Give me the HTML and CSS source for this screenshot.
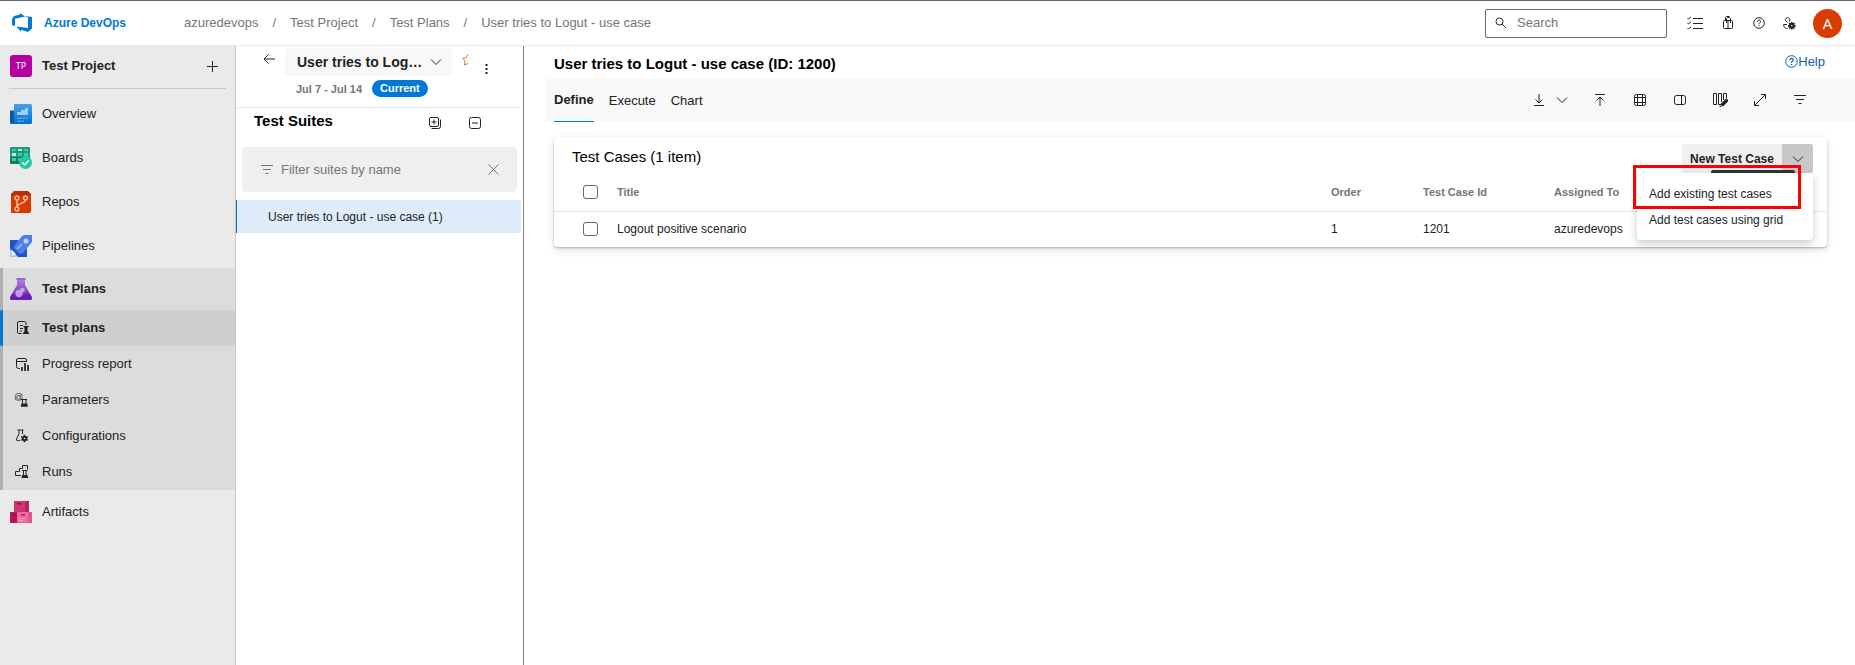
FILE: index.html
```html
<!DOCTYPE html>
<html lang="en">
<head>
<meta charset="utf-8">
<title>User tries to Logut - use case - Test Plans</title>
<link rel="stylesheet" href="styles.css">
</head>
<body>
<header class="topbar">
  <a class="brand" href="#">
    <svg class="brand-logo" width="20" height="20" viewBox="0 0 20 20"><path fill="#0078d7" d="M0 6 2 3 8 1.500V0l5 3.500L3 5.700v7.300L0 12zM20 4v11.300L16 19l-7-2.300V19L4.500 13.600 16 15V4.400L13 3z"/></svg>
    <span>Azure DevOps</span>
  </a>
  <nav class="crumbs" aria-label="Breadcrumb">
    <a href="#">azuredevops</a><span>/</span><a href="#">Test Project</a><span>/</span><a href="#">Test Plans</a><span>/</span><a href="#">User tries to Logut - use case</a>
  </nav>
  <label class="search">
    <svg class="ico" width="12" height="12" viewBox="0 0 12 12"><circle cx="4.500" cy="4.500" r="3.500"/><path d="M7 7l4 4"/></svg>
    <input type="search" placeholder="Search" aria-label="Search">
  </label>
  <div class="top-actions">
    <button type="button" aria-label="Work items"><svg class="ico" width="16" height="14" viewBox="0 0 16 14"><path d="M6 2.500h10M6 7.500h10M6 12.500h10M0.500 2l1 1L4 0.800M0.500 7l1 1L4 5.800M0.500 12l1 1L4 10.800"/></svg></button>
    <button type="button" aria-label="Marketplace"><svg class="ico" width="12" height="14" viewBox="0 0 12 14"><path d="M2.500 4.500h7q1 0 1 1v6q0 1-1 1h-7q-1 0-1-1v-6q0-1 1-1zM4.500 7V2.500l1-1h2l1 1V7M3.500 4V1.500l1-1h3M6 4.500v8"/></svg></button>
    <button type="button" aria-label="Help"><svg class="ico" width="12" height="12" viewBox="0 0 12 12"><circle cx="6" cy="6" r="5.300"/><path d="M4.300 4.800C4.300 2.500 7.700 2.600 7.700 4.700 7.700 5.800 6 5.800 6 7.300M6 8.300v1"/></svg></button>
    <button type="button" aria-label="User settings"><svg class="ico" width="13" height="13" viewBox="0 0 13 13"><path d="M6.500 4.500C7.500 2 6 .8 4.500.8S2 2 2.500 3.500L4.500 5.500M1 7.500h3M1 7c-1 3 1 4.500 3.500 4.500"/><circle class="solid" cx="8.800" cy="8.800" r="2.700"/><path stroke-width="1.700" d="M8.800 5v7.600M5 8.800h7.600M6.100 6.100l5.400 5.400M11.500 6.100l-5.400 5.400"/><circle cx="8.800" cy="8.800" r="0.800" class="hole"/></svg></button>
  </div>
  <button class="avatar" type="button" aria-label="Account">A</button>
</header>

<div class="shell">
  <nav class="sidebar" aria-label="Project">
    <div class="project">
      <span class="project-badge">TP</span>
      <a href="#">Test Project</a>
      <button type="button" aria-label="New"><svg class="ico" width="11" height="11" viewBox="0 0 11 11"><path d="M5.500 0v11M0 5.500h11"/></svg></button>
    </div>
    <a class="hub" href="#"><svg width="22" height="22" viewBox="0 0 22 22"><defs><linearGradient id="ov" x2="0" y2="1"><stop stop-color="#4aa0e8"/><stop offset="1" stop-color="#0070d0"/></linearGradient></defs><path fill="#0b5aa6" d="M0 7.500h5V21H1.500Q0 21 0 19.500z"/><path fill="url(#ov)" d="M4 1h16.500Q22 1 22 2.500v17q0 1.500-1.500 1.500H2.500Q4 21 4 19z"/><path fill="#9cd0fa" d="M7 12V9h4V7h4V5h3v7z"/><path fill="#4b9fe5" d="M7 14.500h11V16H7zM7 17.500h7V19H7z"/></svg><span>Overview</span></a>
    <a class="hub" href="#"><svg width="22" height="22" viewBox="0 0 22 22"><path fill="#219a7c" d="M1 0h18q1 0 1 1v16H1q-1 0-1-1V1q0-1 1-1z"/><path fill="#137c61" d="M0 10h12v7H1q-1 0-1-1z"/><path fill="#45c9a5" d="M2 2h4v2H2zM14 2h4v2h-4zM8 6h4v3H8zM14 6h4v3h-4zM2 11h4v3H2zM8 11h3v3H8z"/><path fill="#a5f2dc" d="M8 2h4v2H8zM2 6h4v3H2z"/><circle cx="15.500" cy="15.500" r="6.500" fill="#1fc9a4"/><path d="M12.300 15.500l2.400 2.300 4.100-4.300" fill="none" stroke="#fff" stroke-width="1.700"/></svg><span>Boards</span></a>
    <a class="hub" href="#"><svg width="22" height="22" viewBox="0 0 22 22"><path fill="#d83b01" d="M1 3h20v17q0 2-2 2H1z"/><path fill="#ba2f00" d="M1 4.500V3l3-3h14l3 3v1.500z"/><g fill="none" stroke="#f9b596" stroke-width="1.500"><circle cx="7" cy="7" r="1.900"/><circle cx="15.500" cy="7" r="1.900"/><circle cx="7" cy="18" r="1.900"/><path d="M7 9v7M15.500 9c0 4-8.500 2.500-8.500 7"/></g></svg><span>Repos</span></a>
    <a class="hub" href="#"><svg width="22" height="22" viewBox="0 0 22 22"><path fill="#1f57c3" d="M0 5h8l9 9v8H8L0 14z"/><path fill="#4a80e8" d="M12 1l2-1h8v7l-9 11-3 1-6-6 1-3z"/><circle cx="16" cy="6" r="2.500" fill="#bcd2ff"/><path d="M7 14l5-5" stroke="#9dbcf8" stroke-width="1.500"/><path fill="#a5c2fa" d="M0 14l3 3H1.500v3.500H5L4.500 18l3 4H0z"/><path fill="#e8f0ff" d="M2 15l4 4-2 1-3-3z"/></svg><span>Pipelines</span></a>
    <div class="hub-group">
      <a class="hub hub-open" href="#"><svg width="22" height="22" viewBox="0 0 22 22"><defs><linearGradient id="fl" x2="0" y2="1"><stop stop-color="#b88ae0"/><stop offset="1" stop-color="#5b1ba8"/></linearGradient></defs><path fill="url(#fl)" d="M7 0h8v7l6.500 11.500Q23 22 20 22H2q-3 0-1.500-3.500L7 7z"/><path fill="#9b60d4" d="M6.500 0h9v2h-9z"/><path fill="#651fb3" d="M2 16h18l1.500 3q.5 3-1.500 3H2q-2 0-1.500-3z"/><circle cx="9" cy="15.500" r="3.700" fill="#d5b3f5" opacity=".8"/><circle cx="12.500" cy="12" r="2.300" fill="#d5b3f5" opacity=".8"/></svg><span>Test Plans</span></a>
      <a class="sub sub-current" href="#"><svg class="ico" width="16" height="16" viewBox="0 0 16 16"><path d="M7.500 13.500H5Q3.500 13.500 3.500 12V3Q3.500 1.500 5 1.500h5.500Q12 1.500 12 3v2M6 5.500h3M6 8.500h3M6 11h2"/><path class="solid" d="M9.500 6h5v1l-1 .5v3.500l2 3H8.500l2-3V7.500l-1-.5z"/></svg><span>Test plans</span></a>
      <a class="sub" href="#"><svg class="ico" width="16" height="16" viewBox="0 0 16 16"><path d="M6 12.500H4.500Q2.500 12.500 2.500 10.500V4Q2.500 2.500 4 2.500h7Q12.500 2.500 12.500 4v2M2.500 5.500h10"/><path stroke-width="1.700" d="M8 11v4M11 7v8M14 9v6"/></svg><span>Progress report</span></a>
      <a class="sub" href="#"><svg class="ico" width="16" height="16" viewBox="0 0 16 16"><text class="glyph" x="0" y="8">@</text><path d="M7 7.500h6M8.500 8v3L7 14h6.500L12 11V8"/><path class="solid" d="M8 11.500h5l.5 3H7z"/></svg><span>Parameters</span></a>
      <a class="sub" href="#"><svg class="ico" width="16" height="16" viewBox="0 0 16 16"><path d="M3.500 2h6M5 2v4L2.500 11Q2 12.500 3.500 12.500h2.500M8.500 2v4"/><circle class="solid" cx="10.500" cy="10.500" r="2.500"/><path stroke-width="1.800" d="M10.500 6.800v7.400M7.300 8.700l6.400 3.600M13.700 8.700l-6.400 3.600"/><circle cx="10.500" cy="10.500" r=".8" class="hole"/></svg><span>Configurations</span></a>
      <a class="sub" href="#"><svg class="ico" width="16" height="16" viewBox="0 0 16 16"><path d="M7 11.500H1.500v-4h4v-3h3v-3h5v4M8 6.500h5.500M9.500 7v3L8 13.500h6L12 10V7"/><path class="solid" d="M8.500 11h4.500l1 3H7.500z"/></svg><span>Runs</span></a>
    </div>
    <a class="hub" href="#"><svg width="22" height="22" viewBox="0 0 22 22"><path fill="#cc3472" d="M4 0h15v11H4z"/><path fill="#b62462" d="M15 0h4v11h-4z"/><path fill="#b41858" d="M0 11h8v11H1q-1 0-1-1z"/><path fill="#ef6a9f" d="M7 11h15v10q0 1-1 1H7z"/><path fill="#e2568f" d="M18 11h4v11h-4z"/><path fill="#8e104a" d="M7 2h4v1.500H7zM3.500 13h3v1.500h-3z"/><path fill="#b41858" d="M11 13h4v1.500h-4z"/><path fill="#f9a4c6" d="M9 17h6v1H9zM9 19h4v1H9z"/></svg><span>Artifacts</span></a>
  </nav>

  <aside class="suites">
    <div class="plan">
      <div class="plan-row">
        <button class="back" type="button" aria-label="Back"><svg class="ico" width="12" height="10" viewBox="0 0 12 10"><path d="M12 5H1M5.500.5L1 5l4.500 4.500"/></svg></button>
        <button class="plan-picker" type="button"><span>User tries to Log…</span><svg class="ico" width="12" height="8" viewBox="0 0 12 8"><path d="M1 1.500l5 5 5-5"/></svg></button>
        <button class="star" type="button" aria-label="Favorite"><svg width="7" height="12" viewBox="0 0 7 12"><path d="M6.500.5Q4.500 1 4.300 3.700L.7 4.300 3 7l-.5 4 3.500-1.500" fill="none" stroke="#dd7a35"/></svg></button>
        <button class="more" type="button" aria-label="More"><svg width="3" height="10" viewBox="0 0 3 10"><path fill="#222" d="M.5 0h2v2h-2zM.5 4h2v2h-2zM.5 8h2v2h-2z"/></svg></button>
      </div>
      <div class="plan-dates"><span>Jul 7 - Jul 14</span><span class="pill">Current</span></div>
    </div>
    <div class="suites-head">
      <h2>Test Suites</h2>
      <button type="button" aria-label="Expand all"><svg class="ico" width="12" height="12" viewBox="0 0 12 12"><rect x=".5" y=".5" width="9" height="9" rx="1.500"/><path d="M5 2.500v5M2.500 5h5M11.500 2.500v7q0 2-2 2h-7"/></svg></button>
      <button type="button" aria-label="Collapse all"><svg class="ico" width="12" height="12" viewBox="0 0 12 12"><rect x=".5" y=".5" width="11" height="11" rx="2"/><path d="M3 6h6"/></svg></button>
    </div>
    <div class="filter">
      <svg class="ico" width="12" height="9" viewBox="0 0 12 9"><path d="M0 .5h12M2 4.500h8M4.500 8.500h3"/></svg>
      <input type="text" placeholder="Filter suites by name" aria-label="Filter suites by name">
      <button type="button" aria-label="Clear"><svg class="ico" width="11" height="11" viewBox="0 0 11 11"><path d="M.5.5l10 10M10.500.5l-10 10"/></svg></button>
    </div>
    <a class="suite" href="#">User tries to Logut - use case (1)</a>
  </aside>

  <main class="main">
    <div class="title-row">
      <h1>User tries to Logut - use case (ID: 1200)</h1>
      <a class="help" href="#"><svg width="13" height="13" viewBox="0 0 13 13" fill="none" stroke="currentColor"><circle cx="6.500" cy="6.500" r="5.800"/><path stroke-width="1.200" d="M4.700 5.200C4.700 2.800 8.300 2.900 8.300 5.100 8.300 6.300 6.500 6.300 6.500 7.900M6.500 9v1.200"/></svg>Help</a>
    </div>
    <div class="toolbar">
      <nav class="tabs" aria-label="Views">
        <a class="tab tab-on" href="#">Define</a><a class="tab" href="#">Execute</a><a class="tab" href="#">Chart</a>
      </nav>
      <div class="tools">
        <button class="tool-import" type="button" aria-label="Import"><svg class="ico" width="10" height="12" viewBox="0 0 10 12"><path d="M5 0v9M1.500 5.500L5 9l3.500-3.500M0 11.500h10"/></svg></button>
        <button class="tool-menu" type="button" aria-label="Import options"><svg class="ico" width="12" height="8" viewBox="0 0 12 8"><path d="M1 1.500l5 5 5-5"/></svg></button>
        <button type="button" aria-label="Export"><svg class="ico" width="10" height="12" viewBox="0 0 10 12"><path d="M5 12V3M1.500 6.500L5 3l3.500 3.500M0 .5h10"/></svg></button>
        <button type="button" aria-label="Grid view"><svg class="ico" width="12" height="12" viewBox="0 0 12 12"><rect x=".5" y=".5" width="11" height="11" rx="2"/><path d="M3.500.5v11M8.500.5v11M.5 3.500h11M.5 8.500h11"/></svg></button>
        <button type="button" aria-label="Details pane"><svg class="ico" width="12" height="10" viewBox="0 0 12 10"><rect x=".5" y=".5" width="11" height="9" rx="2"/><path d="M7.500.5v9"/></svg></button>
        <button type="button" aria-label="Column options"><svg class="ico" width="15" height="14" viewBox="0 0 15 14"><path d="M.5.500h3v11h-3zM8 11.500H5.500V.5h3V9M10.500 7V.5h3V5"/><path stroke-width="3.500" d="M14.500 6.500L8.500 12.500"/><path class="solid" d="M7 12l-.5 2h2z"/></svg></button>
        <button type="button" aria-label="Full screen"><svg class="ico" width="12" height="12" viewBox="0 0 12 12"><path d="M.8 11.200L11.200.8M7 .5h4.500V5M5 11.500H.5V7"/></svg></button>
        <button type="button" aria-label="Filter"><svg class="ico" width="12" height="9" viewBox="0 0 12 9"><path d="M0 .5h12M2 4.500h8M4.500 8.500h3"/></svg></button>
      </div>
    </div>

    <section class="card">
      <div class="card-head">
        <h2>Test Cases (1 item)</h2>
        <div class="split">
          <button class="split-main" type="button">New Test Case</button>
          <button class="split-more" type="button" aria-label="More options" aria-expanded="true"><svg class="ico" width="12" height="8" viewBox="0 0 12 8"><path d="M1 1.500l5 5 5-5"/></svg></button>
          <span class="tip-edge"></span>
          <div class="menu" role="menu">
            <button type="button" role="menuitem">Add existing test cases</button>
            <button type="button" role="menuitem">Add test cases using grid</button>
          </div>
          <span class="marker"></span>
        </div>
      </div>
      <table class="cases">
        <thead>
          <tr><th class="c-check"><input type="checkbox" aria-label="Select all"></th><th>Title</th><th class="c-order">Order</th><th class="c-id">Test Case Id</th><th class="c-who">Assigned To</th></tr>
        </thead>
        <tbody>
          <tr><td class="c-check"><input type="checkbox" aria-label="Select Logout positive scenario"></td><td>Logout positive scenario</td><td>1</td><td>1201</td><td>azuredevops</td></tr>
        </tbody>
      </table>
    </section>
  </main>
</div>
</body>
</html>
```
FILE: styles.css
```css
* { box-sizing: border-box; }

body {
  margin: 0;
  min-height: 100vh;
  display: flex;
  flex-direction: column;
  font: 13px/16px "Liberation Sans", Arial, sans-serif;
  color: #222;
  background: #fff;
}

a { color: inherit; text-decoration: none; }
h1, h2 { margin: 0; color: #000; }
button {
  display: flex;
  align-items: center;
  justify-content: center;
  margin: 0;
  padding: 0;
  border: 0;
  background: none;
  font: inherit;
  color: inherit;
}
input { font: inherit; color: #222; }
input::placeholder { color: #757575; opacity: 1; }
svg { display: block; flex: none; }

.ico { fill: none; stroke: #222; stroke-width: 1; }
.ico .solid { fill: #222; stroke: none; }
.ico .hole { fill: #fff; stroke: none; }
.ico .glyph { fill: #222; stroke: none; font-size: 9px; }

/* Top bar */
.topbar {
  display: flex;
  align-items: center;
  height: 46px;
  padding: 0 13px 0 12px;
  border-top: 1px solid #666;
  border-bottom: 1px solid #eaeaea;
}
.brand {
  display: flex;
  align-items: center;
  gap: 12px;
  width: 172px;
  font-size: 12px;
  font-weight: bold;
  color: #0078d7;
}
.crumbs { display: flex; gap: 14px; flex: 1; color: #757575; }
.search {
  display: flex;
  align-items: center;
  gap: 10px;
  width: 182px;
  height: 29px;
  padding: 0 9px;
  border: 1px solid #666;
  border-radius: 2px;
}
.search input { flex: 1; min-width: 0; padding: 0; border: 0; outline: 0; background: none; }
.top-actions { display: flex; align-items: center; margin: 0 8px 0 11px; }
.top-actions button { width: 31px; height: 28px; }
.top-actions button:first-child { width: 34px; }
.avatar {
  width: 29px;
  height: 29px;
  border-radius: 50%;
  background: #da3b01;
  color: #fff;
  font: 15px/29px "Noto Sans", sans-serif;
}

.shell { display: flex; flex: 1; }

/* Project navigation */
.sidebar {
  width: 236px;
  background: #eaeaea;
  border-right: 1px solid #c8c8c8;
}
.project {
  display: flex;
  align-items: center;
  gap: 10px;
  height: 43px;
  margin: 0 9px 3px;
  padding: 0 8px 2px 1px;
  border-bottom: 1px solid #c8c8c8;
  font-weight: bold;
}
.project a { flex: 1; }
.project-badge {
  width: 22px;
  height: 22px;
  border-radius: 3px;
  background: #b4009e;
  color: #fff;
  font: 9px/22px "Noto Sans", sans-serif;
  text-align: center;
}
.hub { display: flex; align-items: center; gap: 10px; height: 44px; padding-left: 10px; }
.hub-group { border-left: 3px solid #b0b0b0; background: #dcdcdc; }
.hub-open { height: 42px; padding-left: 7px; font-weight: bold; }
.sub { display: flex; align-items: center; gap: 12px; height: 36px; padding-left: 11px; }
.sub-current {
  margin-left: -3px;
  border-left: 3px solid #0078d7;
  border-radius: 2px;
  background: #cfcfcf;
  font-weight: bold;
}

/* Suites panel */
.suites { width: 288px; padding-right: 2px; border-right: 1px solid #808080; }
.plan { height: 62px; padding-top: 2px; border-bottom: 1px solid #eaeaea; }
.plan-row { display: flex; align-items: flex-start; height: 28px; }
.back { width: 49px; height: 22px; padding-left: 17px; }
.plan-picker {
  justify-content: space-between;
  width: 167px;
  height: 28px;
  padding: 0 10px 0 12px;
  border-radius: 2px;
  background: #f8f8f8;
  font-size: 14px;
  font-weight: bold;
  white-space: nowrap;
}
.star { width: 26px; height: 24px; }
.more { width: 16px; height: 42px; }
.plan-dates {
  display: flex;
  align-items: center;
  gap: 10px;
  padding: 4px 0 0 60px;
  color: #757575;
  font-size: 11px;
  font-weight: bold;
}
.pill { padding: 0 8px; border-radius: 9px; background: #0078d7; color: #fff; line-height: 17px; }
.suites-head {
  display: flex;
  align-items: center;
  gap: 28px;
  height: 29px;
  padding: 0 40px 0 18px;
}
.suites-head h2 { flex: 1; padding-bottom: 4px; font-size: 15px; }
.filter {
  display: flex;
  align-items: center;
  height: 45px;
  margin: 10px 4px 8px 6px;
  padding: 0 18px 0 19px;
  border-radius: 4px;
  background: #efefef;
}
.filter .ico { stroke: #757575; }
.filter input { flex: 1; min-width: 0; padding: 0 8px; border: 0; outline: 0; background: none; }
.suite {
  display: block;
  padding: 1px 0 0 31px;
  border-left: 1px solid #0078d7;
  background: #deebf9;
  font-size: 12px;
  line-height: 32px;
}

/* Main area */
.main { flex: 1; min-width: 0; padding-left: 22px; }
.title-row {
  display: flex;
  align-items: center;
  justify-content: space-between;
  height: 33px;
  padding: 0 30px 0 8px;
}
.title-row h1 { padding-top: 3px; font-size: 15px; }
.help { display: flex; align-items: center; padding-bottom: 2px; color: #0b5ea8; }
.toolbar {
  display: flex;
  justify-content: space-between;
  height: 43px;
  padding: 0 35px 0 8px;
  background: #f8f8f8;
}
.tabs { display: flex; gap: 15px; }
.tab { line-height: 43px; }
.tab-on { line-height: 42px; font-weight: bold; border-bottom: 1px solid #0078d7; }
.tools { display: flex; align-items: center; padding-bottom: 2px; }
.tools button { width: 40px; height: 28px; }
.tools .tool-import { width: 10px; }
.tools .tool-menu { width: 36px; }

.card {
  margin: 15px 28px 0 8px;
  border-radius: 4px;
  background: #fff;
  box-shadow: 0 1px 2px rgba(0, 0, 0, .25), 0 3px 8px rgba(0, 0, 0, .12);
}
.card-head {
  display: flex;
  align-items: center;
  justify-content: space-between;
  height: 38px;
  padding: 5px 14px 0 18px;
}
.card-head h2 { padding-bottom: 4px; font-size: 15px; font-weight: normal; }
.split { position: relative; display: flex; height: 29px; font-size: 12px; }
.split-main { width: 100px; border-radius: 2px 0 0 2px; background: #efefef; font-weight: bold; }
.split-more { width: 31px; border-radius: 0 2px 2px 0; background: #c8c8c8; }
.tip-edge {
  position: absolute;
  right: 18px;
  bottom: 0;
  width: 84px;
  height: 3px;
  border-radius: 2px 2px 0 0;
  background: #333;
}
.menu {
  position: absolute;
  top: 29px;
  right: 0;
  width: 176px;
  padding: 8px 0 7px;
  border-radius: 0 0 4px 4px;
  background: #fff;
  box-shadow: 0 4px 10px rgba(0, 0, 0, .2);
}
.menu button { width: 100%; height: 26px; padding-left: 12px; justify-content: flex-start; }
.marker {
  position: absolute;
  top: 21px;
  right: 12px;
  width: 168px;
  height: 44px;
  border: 3px solid #fe0000;
}

.cases { width: 100%; border-collapse: collapse; table-layout: fixed; font-size: 12px; }
.cases th, .cases td { height: 36px; padding: 0; text-align: left; }
.cases th { border-bottom: 1px solid #e5e5e5; padding-bottom: 1px; color: #757575; font-size: 11px; }
.cases td { padding-bottom: 1px; }
.cases .c-check { width: 63px; padding-left: 29px; }
.c-order { width: 92px; }
.c-id { width: 131px; }
.c-who { width: 273px; }
.cases input {
  display: block;
  appearance: none;
  width: 15px;
  height: 14px;
  margin: 0;
  border: 1px solid #666;
  border-radius: 3px;
  background: #fff;
}
```
